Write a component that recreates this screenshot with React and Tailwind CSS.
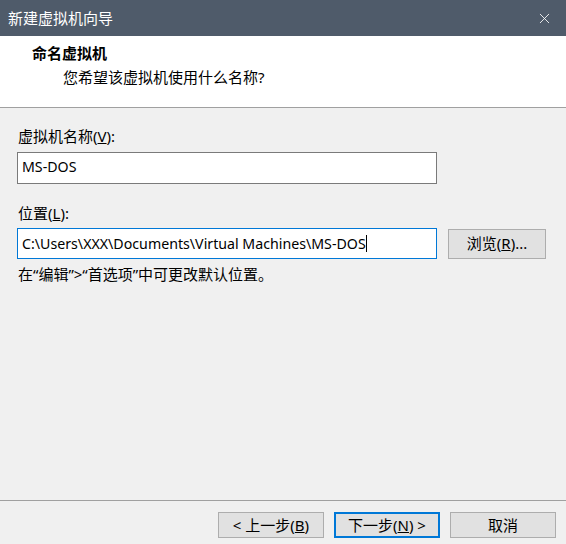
import { X } from "lucide-react";

const font = { fontFamily: "'Noto Sans','Noto Sans CJK SC',sans-serif" };

function Btn({ children, focused = false, className = "" }) {
  return (
    <button
      className={`h-[26px] w-[106px] flex items-center justify-center text-[15px] leading-none text-black bg-[#e1e1e1] ${
        focused ? "border-2 border-[#0078d7]" : "border border-[#adadad]"
      } ${className}`}
    >
      {children}
    </button>
  );
}

export default function App() {
  return (
    <div className="w-[566px] h-[544px] flex flex-col bg-[#f0f0f0] overflow-hidden" style={font}>
      <div className="h-[36px] shrink-0 bg-[#4f5b6a] flex items-center justify-between pl-2 pr-[13px]">
        <span className="text-white text-[15px] leading-none">新建虚拟机向导</span>
        <X size={17} strokeWidth={1.2} className="text-white" />
      </div>

      <div className="h-[72px] shrink-0 bg-white border-b border-[#a0a0a0] pt-[8px]">
        <div className="pl-[32px] text-[15px] font-bold text-black leading-[18px]">命名虚拟机</div>
        <div className="pl-[63px] mt-[6px] text-[15px] text-black leading-[18px]">您希望该虚拟机使用什么名称?</div>
      </div>

      <main className="flex-1 pl-[17px] pr-[20px] pt-[19px]">
        <div className="pl-px text-[15px] leading-[18px] text-black">
          虚拟机名称(<span className="underline">V</span>):
        </div>
        <div className="mt-[7px] w-[420px] h-[32px] bg-white border border-[#7a7a7a] flex items-center pl-[4px] pb-[2px] text-[14.2px] text-black">
          MS-DOS
        </div>

        <div className="mt-[20px] pl-px text-[15px] leading-[18px] text-black">
          位置(<span className="underline">L</span>):
        </div>
        <div className="mt-[6px] flex items-center gap-[11px]">
          <div className="w-[420px] h-[31px] bg-white border border-[#0078d7] flex items-center pl-[4px] text-[14.2px] text-black">
            C:\Users\XXX\Documents\Virtual Machines\MS-DOS
            <span className="inline-block w-px h-[17px] bg-black" />
          </div>
          <button className="w-[98px] h-[30px] bg-[#e1e1e1] border border-[#adadad] text-[15px] leading-none text-black">
            浏览(<span className="underline">R</span>)...
          </button>
        </div>
        <div className="mt-[6px] pl-px text-[15px] leading-[18px] text-black">
          在“编辑”&gt;“首选项”中可更改默认位置。
        </div>
      </main>

      <footer className="h-[44px] shrink-0 border-t border-[#a0a0a0] flex justify-end items-start pt-[11px] pr-[10px] gap-[10px]">
        <Btn>
          &lt; 上一步(<span className="underline">B</span>)
        </Btn>
        <Btn focused>
          下一步(<span className="underline">N</span>) &gt;
        </Btn>
        <Btn>取消</Btn>
      </footer>
    </div>
  );
}
